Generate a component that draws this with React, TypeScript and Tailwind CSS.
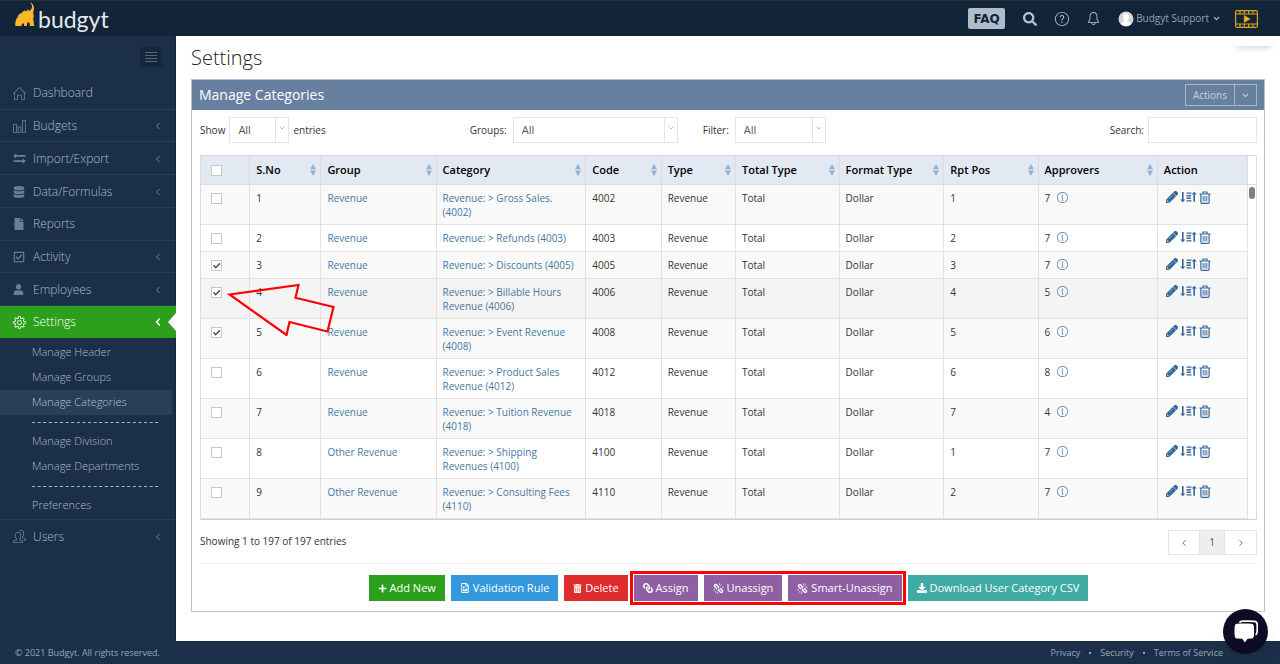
import React from "react";
import {
  FaDatabase, FaFile, FaRegCheckSquare, FaUser, FaSearch, FaPlus, FaRegFileImage,
  FaTrashAlt, FaLink, FaDownload, FaPencilAlt,
} from "react-icons/fa";
import { SlHome, SlChart, SlSettings, SlPeople, SlBell, SlQuestion, SlInfo } from "react-icons/sl";
import { ChevronDown, ChevronLeft, ChevronRight } from "lucide-react";

function ArrowsIcon() {
  return (
    <svg viewBox="0 0 14 12" width="13" height="11" fill="currentColor" aria-hidden="true">
      <path d="M0 3.200 3.400.300v1.900h10.100v2H3.400v1.900zM14 8.800l-3.400 2.900V9.800H.5v-2h10.100V5.900z" />
    </svg>
  );
}

function BrokenChainIcon() {
  return (
    <svg viewBox="0 0 12 12" width="11" height="11" fill="none" stroke="currentColor" aria-hidden="true">
      <path d="M5.200 5.400 6.200 4.300 4 2.100C3.400 1.500 2.600 1.500 2 2.100s-.6 1.400 0 2L4.300 6.300M6.800 6.600l-1 1.100L8 9.900c.6.600 1.400.6 2 0s.6-1.400 0-2L7.700 5.700" strokeWidth="1.500" />
      <path d="M7.300.400v2M9.700 1.800 8.300 3.200M11.600 4.600h-2M4.700 11.600v-2M2.300 10.200l1.400-1.400M.4 7.400h2" strokeWidth=".9" />
    </svg>
  );
}

function SortLinesIcon() {
  return (
    <svg viewBox="0 0 17 12" width="17" height="12" fill="currentColor" aria-hidden="true">
      <path d="M2 1h1.600v7.400H5.400L2.800 11.300.200 8.400H2zM13.400 10.800h1.600V3.600h1.700L14.200.700l-2.600 2.900h1.800zM6.500 1.400h5v1.400h-5zM6.500 4h4.500v1.400H6.500zM6.500 6.600h4.500V8H6.500zM6.500 9.200h5v1.400h-5z" />
    </svg>
  );
}

function BinIcon() {
  return (
    <svg viewBox="0 0 12 13" width="12" height="13" fill="none" stroke="currentColor" aria-hidden="true">
      <path d="M.5 3h11M4 2.800V1h4v1.800M1.900 3v8.300c0 .7.400 1.100 1.100 1.100h6c.7 0 1.100-.4 1.100-1.100V3" strokeWidth="1.200" />
      <path d="M4.200 5v5.500M6 5v5.500M7.800 5v5.500" strokeWidth=".9" />
    </svg>
  );
}

function SortIcon() {
  return (
    <svg viewBox="0 0 6 12" width="6" height="12" fill="#8fb3d9" aria-hidden="true">
      <path d="M3 0 6 5.200H0zM3 12 6 6.600H0z" />
    </svg>
  );
}

function Logo() {
  return (
    <a href="#home" aria-label="budgyt" className="flex items-start text-[#e4e9ee]">
      <svg viewBox="0 0 20 25" width="20" height="25" fill="#fbb62c" className="mt-px" aria-hidden="true">
        <path d="M15.300.200C18.600 1.800 20 6 18.400 9.400c-.4 1-.3 1.900.1 3 .6 1.600-.2 2.900-.3 4.300L19.300 24h-4.400c0-2.200-.3-3.700-1.500-3.700-1.200 0-1.500 1.300-1.500 3.700H9.200c0-1.600-.3-2.700-1.200-2.700-1 0-1.200 1-1.300 2.700H.300c-.2-3.900.5-6.900 2.400-9 .2-1.900 1.700-3.600 4-4.100l1.600-1.700c1.500-1 2.800-.2 4 .1l-.4-2.200 2 1.700c2.700-.4 3.700-3.600 2.800-5.700z" />
      </svg>
      <span className="ml-[3px] mt-[4px] font-['Lato',sans-serif] text-[23px] leading-[28px]">budgyt</span>
    </a>
  );
}

type NavItem = { label: string; icon: React.ReactNode; sub: boolean };
const navItems: NavItem[] = [
  { label: "Dashboard", icon: <SlHome size={13} />, sub: false },
  { label: "Budgets", icon: <SlChart size={13} />, sub: true },
  { label: "Import/Export", icon: <ArrowsIcon />, sub: true },
  { label: "Data/Formulas", icon: <FaDatabase size={12} />, sub: true },
  { label: "Reports", icon: <FaFile size={12} />, sub: false },
  { label: "Activity", icon: <FaRegCheckSquare size={12} />, sub: true },
  { label: "Employees", icon: <FaUser size={11} />, sub: true },
];

function NavRow({ item, active = false }: { item: NavItem; active?: boolean }) {
  return (
    <a
      href={"#" + item.label.toLowerCase()}
      className={
        active
          ? "relative flex h-8 items-center bg-[#2ca01c] pr-3 pl-[13px] text-white"
          : "flex min-h-8 flex-1 items-center border-b border-[#21405c] pt-px pr-3 pl-[13px] text-[#a9b9ca]"
      }
    >
      <span className={active ? "w-5 text-white" : "w-5 text-[#6b7f93]"}>{item.icon}</span>
      <span className="flex-1 text-[12px] font-light">{item.label}</span>
      {item.sub && <ChevronLeft size={12} strokeWidth={active ? 3 : 2} className={active ? "" : "text-[#6f869c]"} />}
      {active && (
        <svg viewBox="0 0 8 18" width="8" height="18" className="absolute right-0" aria-hidden="true">
          <path d="M8 0v18L0 9z" fill="#fff" />
        </svg>
      )}
    </a>
  );
}

function SubLink({ label, current = false }: { label: string; current?: boolean }) {
  return (
    <a
      href="#settings"
      className={
        current
          ? "mr-1 flex h-[25px] items-center bg-[#274058] pl-8 text-[11px] font-light text-[#b4c2d1]"
          : "mr-1 flex h-[25px] items-center pl-8 text-[11px] font-light text-[#a9b9ca]"
      }
    >
      {label}
    </a>
  );
}

function Dashes() {
  return (
    <div className="flex h-[14px] items-center pr-4 pl-8">
      <svg width="100%" height="1" aria-hidden="true">
        <line x1="0" x2="100%" y1="0.5" y2="0.5" stroke="#a9b9ca" strokeDasharray="3 2.600" />
      </svg>
    </div>
  );
}

function Sidebar() {
  return (
    <nav className="w-44 shrink-0 bg-[#1b3048] shadow-[inset_-1px_0_0_#14263b]">
      <div className="flex h-[41px] items-start justify-end pt-[11px] pr-[14px]">
        <button aria-label="Toggle menu" className="flex h-5 w-[22px] flex-col items-center justify-center gap-[2px] bg-[#15273c]">
          <span className="h-px w-3 bg-[#51677e]" />
          <span className="h-px w-3 bg-[#51677e]" />
          <span className="h-px w-3 bg-[#51677e]" />
          <span className="h-px w-3 bg-[#51677e]" />
        </button>
      </div>
      <div className="flex h-[229px] flex-col">
        {navItems.map((n) => <NavRow key={n.label} item={n} />)}
      </div>
      <NavRow active item={{ label: "Settings", icon: <SlSettings size={13} />, sub: true }} />
      <div className="border-b border-[#21405c] pt-[2px] pb-px">
        <SubLink label="Manage Header" />
        <SubLink label="Manage Groups" />
        <SubLink label="Manage Categories" current />
        <Dashes />
        <SubLink label="Manage Division" />
        <SubLink label="Manage Departments" />
        <Dashes />
        <SubLink label="Preferences" />
      </div>
      <a href="#users" className="flex h-[33px] items-center pr-3 pl-[13px] text-[#a9b9ca]">
        <span className="w-5 text-[#6b7f93]"><SlPeople size={13} /></span>
        <span className="flex-1 text-[12px] font-light">Users</span>
        <ChevronLeft size={12} className="text-[#6f869c]" />
      </a>
    </nav>
  );
}

function TopBar() {
  return (
    <header className="flex h-9 items-start justify-between border-t border-[#2c2f33] bg-[#122438] pr-[22px] pl-[15px]">
      <Logo />
      <div className="flex h-[35px] items-center text-[#b4c2d1]">
        <a href="#faq" className="flex h-[21px] w-[37px] items-center justify-center rounded-[2px] bg-[#aebccb] font-['DejaVu_Sans'] text-[12px] font-bold text-[#122438]">FAQ</a>
        <button aria-label="Search" className="ml-[18px]"><FaSearch size={14} /></button>
        <button aria-label="Help" className="ml-[18px]"><SlQuestion size={14} /></button>
        <button aria-label="Notifications" className="ml-[18px]"><SlBell size={13} /></button>
        <button className="ml-[18px] flex items-center text-[10px]">
          <svg viewBox="0 0 16 16" width="16" height="16" className="mr-[2px]" aria-hidden="true">
            <circle cx="8" cy="8" r="7.500" fill="#d5d5d5" />
            <path d="M8 2.200c2.200 0 3.200 1.600 3 3.700-.1 1.700-.9 2.800-1.200 3.700 0 1.500 2.600 1.300 3.400 3.300A7.500 7.500 0 0 1 2.800 12.900c.8-2 3.400-1.800 3.400-3.300C5.900 8.700 5.100 7.600 5 5.900c-.2-2.100.8-3.700 3-3.700z" fill="#fff" />
          </svg>
          <span className="text-[#8fa3b8]">Budgyt Support</span>
          <ChevronDown size={9} strokeWidth={3} className="ml-[3px]" />
        </button>
        <button aria-label="Video tutorials" className="ml-[14px]">
          <svg viewBox="0 0 23 18" width="23" height="18" fill="none" stroke="#d9a31b" strokeWidth="1.200" aria-hidden="true">
            <rect x=".6" y=".6" width="21.800" height="16.800" rx="1.500" />
            <path d="M.6 4h21.800M.6 14h21.800M5 .6V4M9.300.6V4M13.700.6V4M18 .6V4M5 14v3.400M9.300 14v3.400M13.700 14v3.400M18 14v3.400" />
            <path d="M9.500 6v6l5-3z" fill="#fbb62c" />
          </svg>
        </button>
      </div>
    </header>
  );
}

function SelectBox({ id, className }: { id: string; className: string }) {
  return (
    <div className={"relative flex h-[26px] border border-[#e5e5e5] bg-white " + className}>
      <select id={id} className="w-full appearance-none bg-transparent pl-2 text-[11px] text-[#555] outline-none">
        <option>All</option>
      </select>
      <span className="pointer-events-none absolute inset-y-0 right-0 flex w-[13px] justify-center border-l border-[#e5e5e5] pt-[6px]">
        <ChevronDown size={8} className="text-[#999]" />
      </span>
    </div>
  );
}

type Row = { group: string; category: string; code: string; pos: number; approvers: number; checked?: boolean };
const rows: Row[] = [
  { group: "Revenue", category: "Revenue: > Gross Sales. (4002)", code: "4002", pos: 1, approvers: 7 },
  { group: "Revenue", category: "Revenue: > Refunds (4003)", code: "4003", pos: 2, approvers: 7 },
  { group: "Revenue", category: "Revenue: > Discounts (4005)", code: "4005", pos: 3, approvers: 7, checked: true },
  { group: "Revenue", category: "Revenue: > Billable Hours Revenue (4006)", code: "4006", pos: 4, approvers: 5, checked: true },
  { group: "Revenue", category: "Revenue: > Event Revenue (4008)", code: "4008", pos: 5, approvers: 6, checked: true },
  { group: "Revenue", category: "Revenue: > Product Sales Revenue (4012)", code: "4012", pos: 6, approvers: 8 },
  { group: "Revenue", category: "Revenue: > Tuition Revenue (4018)", code: "4018", pos: 7, approvers: 4 },
  { group: "Other Revenue", category: "Revenue: > Shipping Revenues (4100)", code: "4100", pos: 1, approvers: 7 },
  { group: "Other Revenue", category: "Revenue: > Consulting Fees (4110)", code: "4110", pos: 2, approvers: 7 },
];

const headings = ["S.No", "Group", "Category", "Code", "Type", "Total Type", "Format Type", "Rpt Pos", "Approvers", "Action"];

function Check({ label, checked = false }: { label: string; checked?: boolean }) {
  return (
    <span className="relative flex h-[11px] w-[11px]">
      <input
        type="checkbox"
        aria-label={label}
        defaultChecked={checked}
        className="peer h-[11px] w-[11px] appearance-none border border-[#c8c8c8] bg-white"
      />
      <svg viewBox="0 0 11 11" className="pointer-events-none absolute inset-0 hidden peer-checked:block" fill="none" stroke="#555" strokeWidth="1.600" aria-hidden="true">
        <path d="M2.500 5.300 4.700 7.700 8.800 3.400" />
      </svg>
    </span>
  );
}

function Cell({ children }: { children: React.ReactNode }) {
  return <td className="h-[27px] border-r border-b border-[#e2e2e2] px-[6px] pt-[6px] pb-[5px] align-top">{children}</td>;
}

function CategoryTable() {
  return (
    <div className="relative mt-[12px] flex border border-[#dcdcdc] border-b-[#cfcfcf]">
      <table className="w-full flex-1 table-fixed border-separate border-spacing-0 text-[10px] leading-[14px] text-[#333]">
        <colgroup>
          <col className="w-[4.700%]" /><col className="w-[6.800%]" /><col className="w-[11%]" /><col className="w-[14.300%]" />
          <col className="w-[7.200%]" /><col className="w-[7.100%]" /><col className="w-[9.900%]" /><col className="w-[10%]" />
          <col className="w-[9%]" /><col className="w-[11.400%]" /><col />
        </colgroup>
        <thead>
          <tr className="bg-[#e3e9f3] text-left text-[11px] text-black">
            <th className="h-[29px] border-r border-b border-[#dcdcdc] pl-[10px]"><Check label="Select all" /></th>
            {headings.map((h) => (
              <th key={h} className="border-r border-b border-[#dcdcdc] pr-1 pl-[6px] font-semibold">
                <span className="flex items-center justify-between">
                  {h}
                  {h !== "Action" && <SortIcon />}
                </span>
              </th>
            ))}
          </tr>
        </thead>
        <tbody>
          {rows.map((r, i) => (
            <tr key={r.code} className={r.code === "4006" ? "bg-[#f4f4f4]" : i % 2 ? "bg-white" : "bg-[#f9f9f9]"}>
              <td className="border-r border-b border-[#e2e2e2] pt-2 pl-[10px] align-top">
                <Check label={"Select " + r.category} checked={r.checked} />
              </td>
              <Cell>{i + 1}</Cell>
              <Cell><a href="#group" className="text-[#4678a4]">{r.group}</a></Cell>
              <Cell><a href="#category" className="block text-[#4678a4]">{r.category}</a></Cell>
              <Cell>{r.code}</Cell>
              <Cell>Revenue</Cell>
              <Cell>Total</Cell>
              <Cell>Dollar</Cell>
              <Cell>{r.pos}</Cell>
              <Cell>
                <span className="flex gap-[7px]">
                  {r.approvers}
                  <button aria-label="Approver details" className="h-3 text-[#4678a4]"><SlInfo size={11} /></button>
                </span>
              </Cell>
              <Cell>
                <span className="flex h-3 items-center gap-[2px] pl-[2px] text-[#33689a]">
                  <button aria-label="Edit"><FaPencilAlt size={12} stroke="currentColor" strokeWidth={24} /></button>
                  <button aria-label="Reorder"><SortLinesIcon /></button>
                  <button aria-label="Delete"><BinIcon /></button>
                </span>
              </Cell>
            </tr>
          ))}
        </tbody>
      </table>
      <div className="flex w-2 flex-col items-center">
        <div className="h-[29px] w-full border-b border-[#dcdcdc]" />
        <div className="mt-[2px] h-3 w-[6px] rounded-full bg-[#7f7f7f]" />
      </div>
      <svg viewBox="0 0 108 54" width="108" height="54" className="pointer-events-none absolute top-[126px] left-[26px]" fill="none" stroke="#fe0000" strokeWidth="2.200" aria-hidden="true">
        <path d="M2.500 12.500 71.500 3 68.500 15.800 106.500 25 100.500 49.500 62.500 40 59.500 53z" />
      </svg>
    </div>
  );
}

const btn = "flex h-[26px] items-center gap-[3px] px-[9px] text-[11px] text-white ";

export default function App() {
  return (
    <div className="flex min-h-screen flex-col bg-white font-['Open_Sans','Noto_Sans',sans-serif] text-[#333]">
      <TopBar />
      <div className="flex flex-1">
        <Sidebar />
        <main className="relative min-w-0 flex-1 px-[15px] pb-[29px]">
          <div className="absolute top-0 right-[7px] h-[10px] w-[38px] bg-white shadow-md" />
          <h1 className="h-[43px] pt-2 text-[20px] leading-7 font-light text-[#222]">Settings</h1>
          <section className="border border-[#b4c3d5]">
            <div className="flex h-[30px] items-center justify-between bg-[#67809f] px-[7px] text-white">
              <h2 className="text-[14px] leading-[26px]">Manage Categories</h2>
              <div className="flex h-[22px] border border-[#a9b7c8] text-[10px] text-[#c9d3df]">
                <button className="border-r border-[#a9b7c8] px-[7px]">Actions</button>
                <button aria-label="More actions" className="px-[6px]"><ChevronDown size={9} strokeWidth={3} /></button>
              </div>
            </div>
            <div className="pt-[7px] pr-[7px] pb-[10px] pl-2">
              <div className="flex h-[26px] items-center text-[10px]">
                <div className="flex items-center gap-1">
                  <label htmlFor="length">Show</label>
                  <SelectBox id="length" className="w-[60px]" />
                  <span>entries</span>
                </div>
                <div className="ml-36 flex items-center gap-[6px]">
                  <label htmlFor="groups">Groups:</label>
                  <SelectBox id="groups" className="w-[165px]" />
                </div>
                <div className="ml-[25px] flex items-center gap-[6px]">
                  <label htmlFor="filter">Filter:</label>
                  <SelectBox id="filter" className="w-[91px]" />
                </div>
                <div className="ml-auto flex items-center gap-1">
                  <label htmlFor="search">Search:</label>
                  <input id="search" type="text" className="h-[26px] w-[109px] border border-[#e5e5e5] px-2 outline-none" />
                </div>
              </div>
              <CategoryTable />
              <div className="flex items-start justify-between border-b border-[#eee] pt-[10px] pb-[8px]">
                <p className="pt-[3px] text-[10px] leading-4">Showing 1 to 197 of 197 entries</p>
                <div className="flex h-[25px] divide-x divide-[#e5e5e5] border border-[#e5e5e5] text-[10px] text-[#555]">
                  <button aria-label="Previous page" className="flex w-[31px] items-center justify-center"><ChevronLeft size={10} /></button>
                  <button className="w-[25px] bg-[#eee]">1</button>
                  <button aria-label="Next page" className="flex w-[31px] items-center justify-center"><ChevronRight size={10} /></button>
                </div>
              </div>
              <div className="mt-[11px] flex justify-center gap-[6px]">
                <button className={btn + "bg-[#2ca01c]"}><FaPlus size={9} />Add New</button>
                <button className={btn + "bg-[#3598dc]"}><FaRegFileImage size={10} />Validation Rule</button>
                <button className={btn + "bg-[#df2c2c]"}><FaTrashAlt size={9} />Delete</button>
                <div className="flex gap-[6px] outline-[3px] outline-offset-1 outline-[#fb0007] outline-solid">
                  <button className={btn + "bg-[#8e5fa2]"}><FaLink size={10} className="-scale-x-100" />Assign</button>
                  <button className={btn + "bg-[#8e5fa2]"}><BrokenChainIcon />Unassign</button>
                  <button className={btn + "bg-[#8e5fa2]"}><BrokenChainIcon />Smart-Unassign</button>
                </div>
                <button className={btn + "bg-[#3faba4]"}><FaDownload size={10} />Download User Category CSV</button>
              </div>
            </div>
          </section>
        </main>
      </div>
      <footer className="flex h-[23px] items-center justify-between bg-[#1b3048] pr-[57px] pl-[15px] text-[9px] text-[#93a7bb]">
        <p>© 2021 Budgyt. All rights reserved.</p>
        <div className="flex items-center gap-[9px]">
          <a href="#privacy">Privacy</a>
          <span className="h-[2px] w-[2px] bg-[#93a7bb]" />
          <a href="#security">Security</a>
          <span className="h-[2px] w-[2px] bg-[#93a7bb]" />
          <a href="#terms">Terms of Service</a>
        </div>
      </footer>
      <button aria-label="Open chat" className="fixed right-3 bottom-[10px] flex h-[45px] w-[45px] items-center justify-center rounded-full bg-[#0d0c24] shadow-lg">
        <svg viewBox="0 0 24 24" width="24" height="24" fill="none" aria-hidden="true">
          <path d="M5.500 2.600C6 1.500 7 1.300 9 1.200c4-.2 8-.2 11.500.2 2 .2 2.600 1 2.700 3 .1 3 .1 5.500-.2 8-.1 1.200-.6 2-1.500 2.300" stroke="#fff" strokeWidth="1.700" />
          <path d="M3.200 3.800c4.700-.5 9.600-.5 14.200 0 1.600.2 2.400 1 2.500 2.600.3 3.500.3 6.500 0 9.500-.2 1.600-1 2.500-2.600 2.600l-3.800.3-2.600 3.800-2.600-3.800-5-.3c-1.600-.1-2.400-1-2.600-2.600C.4 12.900.4 9.800.7 6.400.8 4.800 1.600 4 3.200 3.800z" fill="#fff" />
        </svg>
      </button>
    </div>
  );
}
